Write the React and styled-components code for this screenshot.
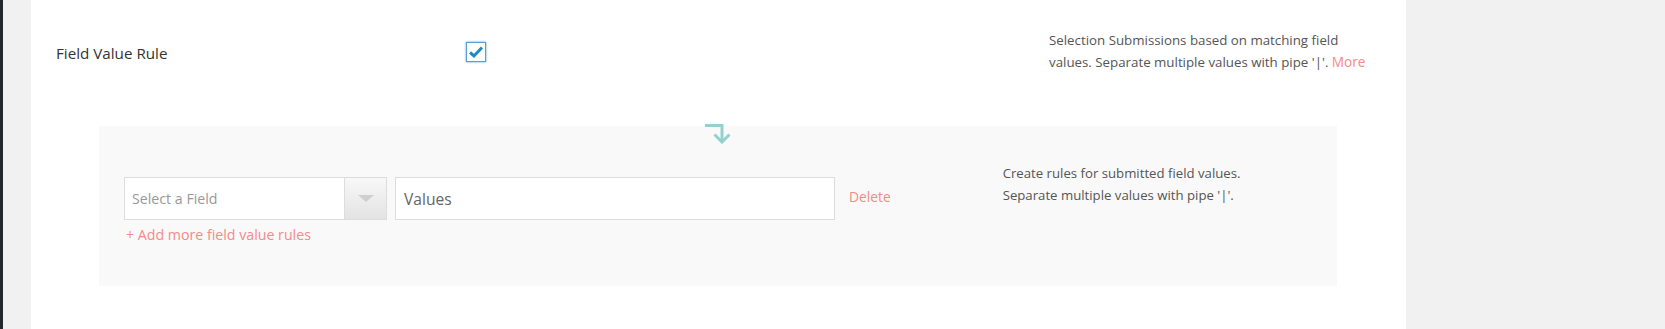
import React from "react";
import styled, { createGlobalStyle } from "styled-components";

const GlobalStyle = createGlobalStyle`
    html, body {
        margin: 0;
        padding: 0;
        height: 100%;
        background: #f1f1f1;
    }
    body {
        font-family: "Open Sans", "Noto Sans", sans-serif;
        color: #444;
    }
    #root {
        height: 100%;
    }
`;

const Page = styled.div`
    display: flex;
    height: 329px;
    overflow: hidden;
`;

const DarkEdge = styled.div`
    width: 3px;
    background: #23282d;
`;

const Gutter = styled.div`
    width: 28px;
    background: #f1f1f1;
`;

const Main = styled.div`
    width: 1375px;
    background: #fff;
    display: flex;
    flex-direction: column;
`;

const Side = styled.div`
    flex: 1;
    background: #f1f1f1;
`;

const SettingRow = styled.div`
    display: grid;
    grid-template-columns: 410px 583px 340px;
    align-items: center;
    padding: 27px 0 0 25px;
    height: 50px;
`;

const Label = styled.div`
    font-size: 15.2px;
    color: #333;
    margin-top: 1px;
`;

const CheckBox = styled.span`
    display: inline-flex;
    align-items: center;
    justify-content: center;
    width: 18px;
    height: 18px;
    border: 1px solid #5b9dd9;
    box-shadow: 0 0 2px rgba(30, 140, 190, 0.8);
    background: #fff;
    margin-top: 2px;
`;

const HelpText = styled.div`
    font-size: 13.3px;
    line-height: 22px;
    color: #555;
    margin-top: -2px;
`;

const MoreLink = styled.a`
    color: #f58a8a;
    font-size: 13.6px;
    text-decoration: none;
`;

const Panel = styled.div`
    margin: 49px 0 0 68px;
    width: 1238px;
    height: 160px;
    background: #f9f9f9;
    display: flex;
    flex-direction: column;
`;

const ArrowWrap = styled.div`
    display: flex;
    justify-content: center;
    height: 20px;
    margin-top: -2px;
`;

const RuleArea = styled.div`
    display: flex;
    align-items: flex-start;
    padding: 33px 0 0 25px;
`;

const RuleColumn = styled.div`
    display: flex;
    flex-direction: column;
`;

const RuleRow = styled.div`
    display: flex;
    align-items: center;
`;

const SelectBox = styled.div`
    display: flex;
    width: 263px;
    height: 43px;
    box-sizing: border-box;
    border: 1px solid #ddd;
    background: #fff;
`;

const SelectText = styled.div`
    flex: 1;
    display: flex;
    align-items: center;
    padding-left: 7px;
    font-size: 14.2px;
    color: #999;
    border-right: 1px solid #ddd;
`;

const SelectButton = styled.div`
    width: 41px;
    display: flex;
    align-items: center;
    justify-content: center;
    background: linear-gradient(#f8f8f8, #e3e3e3);
    &::after {
        content: "";
        border-left: 8px solid transparent;
        border-right: 8px solid transparent;
        border-top: 7px solid #cfcfcf;
    }
`;

const ValueInput = styled.input`
    width: 440px;
    height: 43px;
    box-sizing: border-box;
    margin-left: 8px;
    border: 1px solid #ddd;
    background: #fff;
    padding: 0 8px;
    font-family: inherit;
    font-size: 15.6px;
    color: #666;
    outline: none;
    &::placeholder {
        color: #666;
    }
`;

const DeleteLink = styled.a`
    margin-left: 14px;
    margin-top: -4px;
    font-size: 13.8px;
    color: #f58a8a;
    text-decoration: none;
`;

const AddLink = styled.a`
    margin-top: 5px;
    padding-left: 2px;
    font-size: 14.2px;
    color: #f58a8a;
    text-decoration: none;
`;

const RuleHelp = styled.div`
    margin-left: 112px;
    margin-top: -15px;
    font-size: 13.2px;
    line-height: 22px;
    color: #555;
`;

const CheckIcon = () => (
    <svg width="16" height="14" viewBox="0 0 16 14">
        <path d="M2 7.5 L6 11 L14 2.5" fill="none" stroke="#1e8cbe" strokeWidth="3" />
    </svg>
);

const DownArrow = () => (
    <svg width="28" height="20" viewBox="0 0 28 20">
        <path d="M1 1.5 H18 V18" fill="none" stroke="#93d1d0" strokeWidth="3" />
        <path d="M10.5 10.5 L18 18 L25.5 10.5" fill="none" stroke="#93d1d0" strokeWidth="3" />
    </svg>
);

const App = () => {
    return (
        <>
            <GlobalStyle />
            <Page>
                <DarkEdge />
                <Gutter />
                <Main>
                    <SettingRow>
                        <Label>Field Value Rule</Label>
                        <div>
                            <CheckBox>
                                <CheckIcon />
                            </CheckBox>
                        </div>
                        <HelpText>
                            Selection Submissions based on matching field
                            <br />
                            values. Separate multiple values with pipe '|'. <MoreLink href="#">More</MoreLink>
                        </HelpText>
                    </SettingRow>
                    <Panel>
                        <ArrowWrap>
                            <DownArrow />
                        </ArrowWrap>
                        <RuleArea>
                            <RuleColumn>
                                <RuleRow>
                                    <SelectBox>
                                        <SelectText>Select a Field</SelectText>
                                        <SelectButton />
                                    </SelectBox>
                                    <ValueInput placeholder="Values" />
                                    <DeleteLink href="#">Delete</DeleteLink>
                                </RuleRow>
                                <AddLink href="#">+ Add more field value rules</AddLink>
                            </RuleColumn>
                            <RuleHelp>
                                Create rules for submitted field values.
                                <br />
                                Separate multiple values with pipe '|'.
                            </RuleHelp>
                        </RuleArea>
                    </Panel>
                </Main>
                <Side />
            </Page>
        </>
    );
};

export default App;
